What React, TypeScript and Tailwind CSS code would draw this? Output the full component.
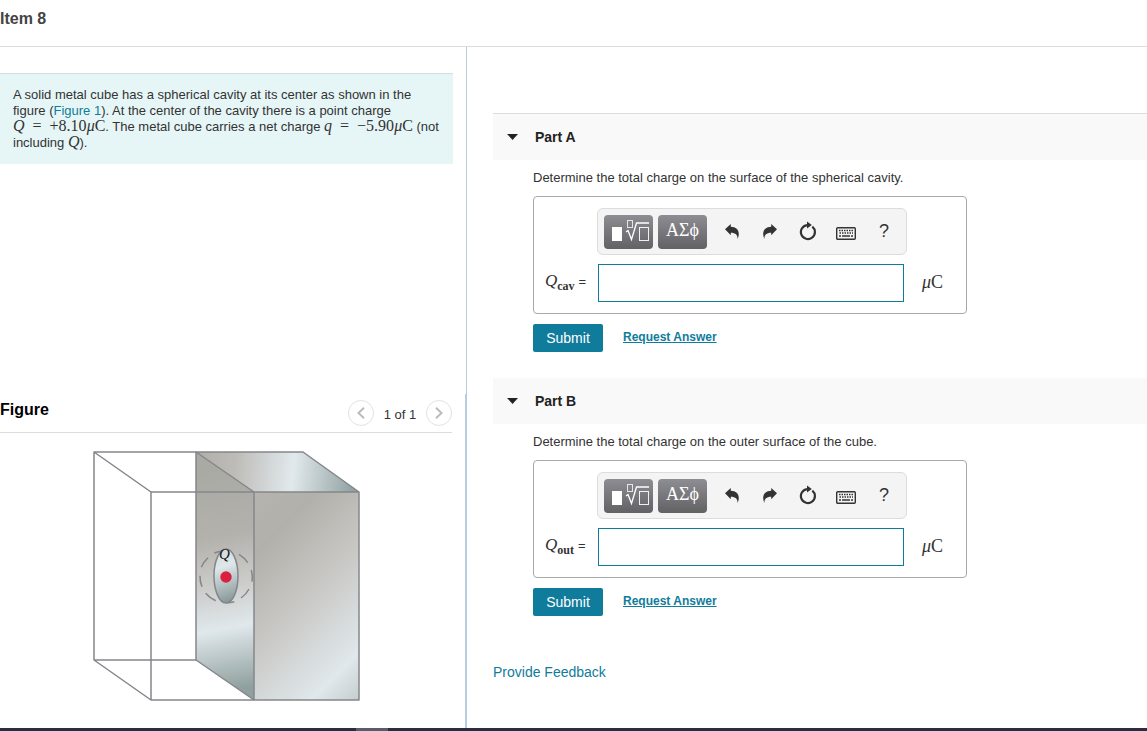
import React, { useState } from "react";

const MATH = "font-['Liberation_Serif',serif]";

function UndoIcon({ className = "" }: { className?: string }) {
  return (
    <svg width="14" height="15" viewBox="0 0 14 15" fill="#333" className={className} aria-hidden="true">
      <path d="M0 5.200 5.800 0v2.800c5 .2 8 2.800 8 7.200 0 2.200-.8 4-1.300 5 .3-4-2-6.200-6.700-6.200v2.400z" />
    </svg>
  );
}

function ResetIcon() {
  return (
    <svg width="18" height="20" viewBox="0 0 18 20" fill="none" aria-hidden="true">
      <path d="M13.300 5.600A7 7 0 1 1 8 4.100" stroke="#333" strokeWidth="2.200" />
      <path d="M8 0.500 12.800 4 8 7.500z" fill="#333" />
    </svg>
  );
}

function KeyboardIcon() {
  return (
    <svg width="20" height="13" viewBox="0 0 20 13" fill="none" stroke="#333" aria-hidden="true">
      <rect x="0.700" y="0.700" width="18.600" height="11.600" rx="1" strokeWidth="1.400" />
      <path d="M3 3.500h14" strokeWidth="1.500" strokeDasharray="1.500 1" />
      <path d="M3.500 6h13.500" strokeWidth="1.500" strokeDasharray="1.500 1" />
      <path d="M3 9h2M6 9h8M15 9h2" strokeWidth="1.500" />
    </svg>
  );
}

function TemplateIcon() {
  return (
    <svg width="48" height="34" viewBox="1 0 48 34" fill="none" stroke="#fff" className="shrink-0" aria-hidden="true">
      <rect x="8" y="13" width="10" height="14" fill="#fff" stroke="none" />
      <rect x="23.500" y="6.500" width="5" height="7" strokeOpacity="0.800" />
      <path d="M22 18l2-1.500 3.500 9L32.500 9H45" strokeWidth="1.300" />
      <rect x="35.500" y="13.500" width="9" height="13" strokeOpacity="0.900" />
    </svg>
  );
}

function CubeFigure() {
  return (
    <svg width="267" height="250" viewBox="0 0 267 250" fill="none" role="img" aria-label="Metal cube with a spherical cavity">
      <defs>
        <linearGradient id="top" x1="103" y1="0" x2="266" y2="18" gradientUnits="userSpaceOnUse">
          <stop offset="0" stopColor="#b0aea8" />
          <stop offset="0.250" stopColor="#bebcb8" />
          <stop offset="0.600" stopColor="#e1e9ec" />
          <stop offset="1" stopColor="#8d9e9e" />
        </linearGradient>
        <linearGradient id="side" x1="114" y1="20" x2="154" y2="236" gradientUnits="userSpaceOnUse">
          <stop offset="0" stopColor="#a9aaa4" />
          <stop offset="0.300" stopColor="#b3b1ab" />
          <stop offset="0.520" stopColor="#cbcbc9" />
          <stop offset="0.720" stopColor="#e0e8eb" />
          <stop offset="1" stopColor="#90a09f" />
        </linearGradient>
        <linearGradient id="front" x1="161" y1="41" x2="317" y2="197" gradientUnits="userSpaceOnUse">
          <stop offset="0" stopColor="#b6b4ae" />
          <stop offset="0.200" stopColor="#b2b0aa" />
          <stop offset="0.500" stopColor="#c8c7c4" />
          <stop offset="0.850" stopColor="#e0e8eb" />
          <stop offset="1" stopColor="#c5cdcf" />
        </linearGradient>
        <linearGradient id="cavity" x1="124" y1="100" x2="142" y2="152" gradientUnits="userSpaceOnUse">
          <stop offset="0" stopColor="#d3dadc" />
          <stop offset="0.300" stopColor="#dfe7ea" />
          <stop offset="1" stopColor="#7f9190" />
        </linearGradient>
      </defs>
      <path d="M103 1H210L266 41H161z" fill="url(#top)" />
      <path d="M103 1 161 41V249L103 209z" fill="url(#side)" />
      <path d="M161 41H266V249H161z" fill="url(#front)" />
      <g stroke="#85868a" strokeWidth="1.500" strokeLinejoin="round">
        <path d="M103 1H1V209H103M1 1 58 41V249L1 209M58 249H161" />
        <path d="M103 1H210L266 41V249H161L103 209zM103 1 161 41V249M58 41H266" />
        {/* Hidden outline of the cavity */}
        <path d="M121.300 102A26 26 0 0 1 129.700 100M146 103.300A26 26 0 0 1 154.700 111.700M158.300 119A26 26 0 0 1 159 130.700M156 138A26 26 0 0 1 148 147" />
        <path d="M141.300 150.700A26 26 0 0 1 133.700 151.700M122.700 149.700A26 26 0 0 1 112.700 142.300M109 135.700A26 26 0 0 1 107 124.700M108.300 116.300A26 26 0 0 1 115 106.700" />
      </g>
      <ellipse cx="133" cy="125" rx="12" ry="27" fill="url(#cavity)" stroke="#85868a" strokeWidth="1.500" />
      <circle cx="133" cy="126" r="5.700" fill="#d9213f" />
      <text x="126" y="108" fontSize="15" fontStyle="italic" fontFamily="'Liberation Serif', serif" fill="#111">Q</text>
    </svg>
  );
}

type PartProps = {
  id: string;
  title: string;
  question: string;
  sub: string;
  first?: boolean;
};

function Part({ id, title, question, sub, first }: PartProps) {
  const [open, setOpen] = useState(true);
  const [answer, setAnswer] = useState("");
  const tool = "flex h-8 w-[38px] items-center justify-center";
  const dark = "flex h-[34px] w-[49px] items-center justify-center rounded bg-gradient-to-b from-[#8e8d93] to-[#626265] pb-0.5";

  return (
    <section className="mb-[26px]">
      <h2 className={first ? "border-t border-[#dcdcdc] bg-[#f9f9f9]" : "bg-[#f9f9f9]"}>
        <button
          onClick={() => setOpen(!open)}
          aria-expanded={open}
          className="flex h-[46px] w-full items-center gap-[17px] pl-[14px] text-[14px] font-bold text-[#222]"
        >
          <svg width="11" height="6" viewBox="0 0 11 6" fill="#222" aria-hidden="true">
            <path d="M0 0h11L5.500 6z" />
          </svg>
          {title}
        </button>
      </h2>

      {open && (
        <div className="pl-10">
          <p className="pt-[10px] text-[13px] leading-4">{question}</p>

          <div className="mt-[10px] max-w-[434px] rounded border border-[#a9a9a9] pt-[11px] pb-[11px]">
            {/* Equation toolbar */}
            <div className="ml-[63px] flex h-[47px] w-[310px] items-center gap-[5px] rounded-md border border-[#dcdcdc] bg-[#f4f4f4] pl-[6px]">
              <button className={dark} aria-label="Templates">
                <TemplateIcon />
              </button>
              <button className={`${dark} ${MATH} text-[18px] text-white`} aria-label="Symbols">ΑΣϕ</button>
              <div className="ml-px flex items-center pb-px">
                <button className={tool} aria-label="Undo"><UndoIcon /></button>
                <button className={tool} aria-label="Redo"><UndoIcon className="-scale-x-100" /></button>
                <button className={tool} aria-label="Reset"><ResetIcon /></button>
                <button className={`${tool} pt-1`} aria-label="Keyboard"><KeyboardIcon /></button>
                <button className={`${tool} text-[18px] text-[#333]`} aria-label="Help">?</button>
              </div>
            </div>

            <div className="mt-[9px] flex items-center">
              <label htmlFor={id} className={`w-16 pb-1 pl-[11px] whitespace-nowrap ${MATH}`}>
                <i className="text-[17px]">Q</i>
                <span className="relative top-1 text-[12px] font-bold">{sub}</span>
                <span className="ml-1 font-['Liberation_Sans',sans-serif] text-[13px]">=</span>
              </label>
              <input
                id={id}
                value={answer}
                onChange={(e) => setAnswer(e.target.value)}
                className="h-[38px] w-[306px] border border-[#107c9c] bg-white px-2 text-[14px] outline-none"
              />
              <span className={`ml-[18px] pb-0.5 text-[18px] ${MATH}`}><i>μ</i>C</span>
            </div>
          </div>

          <div className="mt-[10px] flex items-center gap-5">
            <button className="h-7 w-[70px] rounded-xs bg-[#107c9c] text-[14px] text-white">Submit</button>
            <a href="#" className="pb-0.5 text-[12px] font-bold text-[#107c9c] underline">Request Answer</a>
          </div>
        </div>
      )}
    </section>
  );
}

export default function App() {
  const circle = "flex size-[26px] items-center justify-center rounded-full border border-[#e2e2e2]";

  return (
    <div className="flex min-h-screen flex-col bg-white font-['Liberation_Sans',Arial,sans-serif] text-[#333]">
      <header className="border-b border-[#dcdcdc] pt-[7px] pb-[15px]">
        <h1 className="text-[16px] leading-6 font-bold text-[#444]">Item 8</h1>
      </header>

      <div className="flex flex-1">
        {/* Problem and figure */}
        <aside className="flex w-[467px] shrink-0 flex-col">
          <div className="min-h-[347px] border-r border-[#b8cce0] pt-[26px] pr-[13px]">
            <div className="border-t border-[#d3dfdf] bg-[#e6f6f7] pt-[13px] pb-[13px] pl-[13px] text-[13px] leading-4">
              A solid metal cube has a spherical cavity at its center as shown in the
              <br />
              figure (<a href="#figure" className="text-[#107c9c]">Figure 1</a>). At the center of the cavity there is a point charge
              <br />
              <span className={`text-[16px] leading-3 ${MATH}`}><i>Q</i><span className="mx-2">=</span>+8.10<i>μ</i>C</span>. The metal cube carries a net charge{" "}
              <span className={`text-[16px] leading-3 ${MATH}`}><i>q</i><span className="mx-2">=</span>−5.90<i>μ</i>C</span> (not
              <br />
              including <i className={`text-[16px] leading-3 ${MATH}`}>Q</i>).
            </div>
          </div>

          <div id="figure" className="flex-1 border-r-2 border-[#b8cce0] pt-[6px] pr-[13px]">
            <div className="flex h-[33px] items-start border-b border-[#dcdcdc]">
              <h2 className="flex-1 text-[16px] leading-5 font-bold text-black">Figure</h2>
              <button className={circle} aria-label="Previous figure">
                <svg width="8" height="12" viewBox="0 0 8 12" fill="none" stroke="#bbb" strokeWidth="2" aria-hidden="true">
                  <path d="M7 0.700 1.500 6 7 11.300" />
                </svg>
              </button>
              <span className="w-[52px] pt-[5px] text-center text-[13px] leading-5">1 of 1</span>
              <button className={circle} aria-label="Next figure">
                <svg width="8" height="12" viewBox="0 0 8 12" fill="none" stroke="#bbb" strokeWidth="2" aria-hidden="true">
                  <path d="M1 0.700 6.500 6 1 11.300" />
                </svg>
              </button>
            </div>
            <div className="flex justify-center pt-[18px]">
              <CubeFigure />
            </div>
          </div>
        </aside>

        {/* Answer parts */}
        <main className="min-w-0 flex-1 pt-[66px] pl-[26px]">
          <Part
            id="cav"
            title="Part A"
            question="Determine the total charge on the surface of the spherical cavity."
            sub="cav"
            first
          />
          <Part
            id="out"
            title="Part B"
            question="Determine the total charge on the outer surface of the cube."
            sub="out"
          />
          <a href="#" className="mt-5 inline-block text-[14px] leading-5 text-[#107c9c]">Provide Feedback</a>
        </main>
      </div>

      <footer className="flex h-[3px] bg-[#2a2d42]">
        <div className="ml-[356px] w-8 bg-[#5a5c6b]" />
      </footer>
    </div>
  );
}
